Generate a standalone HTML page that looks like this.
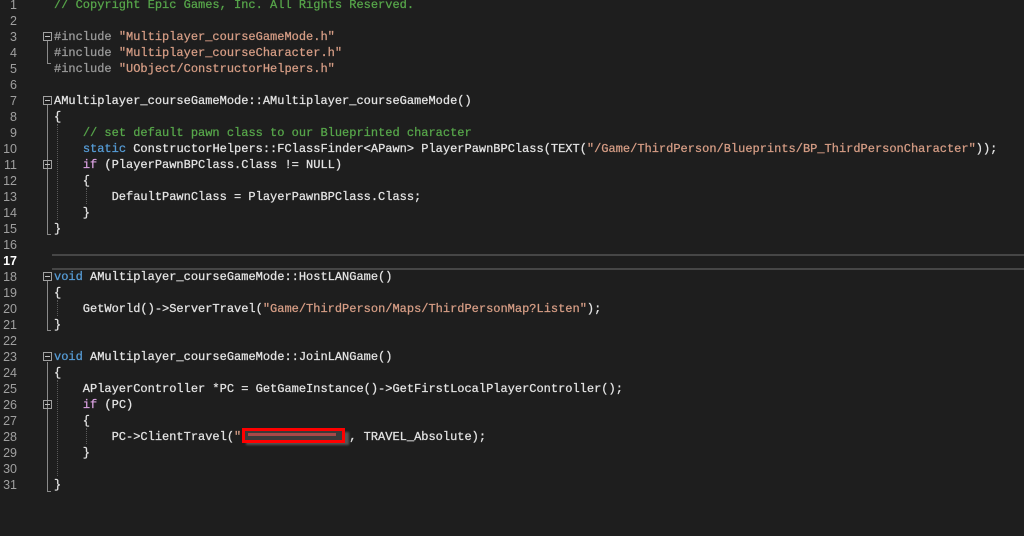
<!DOCTYPE html>
<html><head><meta charset="utf-8"><style>
body{margin:0;width:1024px;height:536px;background:#1e1e1e;overflow:hidden;position:relative;font-family:"Liberation Mono",monospace;font-size:12px;color:#e4e4e4}
.l{position:absolute;left:54px;white-space:pre;line-height:16px;height:16px;-webkit-text-stroke:0.25px currentColor}
.n{position:absolute;left:0;width:17px;text-align:right;color:#a0a0a0;white-space:pre;line-height:16px;font-family:"Liberation Sans",sans-serif;font-size:12.5px}
.c{color:#57a64a}.s{color:#d69d85}.k{color:#569cd6}.p{color:#d8a0df}.m{color:#9b9b9b}
.fold{position:absolute;left:43px;width:7px;height:7px;border:1px solid #a0a0a0;box-sizing:content-box}
.fold:after{content:"";position:absolute;left:1px;top:3px;width:5px;height:1px;background:#c0c0c0}
.v{position:absolute;left:47px;width:1px;background:#8a8a8a}
.d{position:absolute;width:0;border-left:1px dotted #5a5a5a}
</style></head><body>
<div class="n" style="top:-3px">1</div><div class="n" style="top:13px">2</div><div class="n" style="top:29px">3</div><div class="n" style="top:45px">4</div><div class="n" style="top:61px">5</div><div class="n" style="top:77px">6</div><div class="n" style="top:93px">7</div><div class="n" style="top:109px">8</div><div class="n" style="top:125px">9</div><div class="n" style="top:141px">10</div><div class="n" style="top:157px">11</div><div class="n" style="top:173px">12</div><div class="n" style="top:189px">13</div><div class="n" style="top:205px">14</div><div class="n" style="top:221px">15</div><div class="n" style="top:237px">16</div><div class="n" style="top:253px;color:#fff;font-weight:bold">17</div><div class="n" style="top:269px">18</div><div class="n" style="top:285px">19</div><div class="n" style="top:301px">20</div><div class="n" style="top:317px">21</div><div class="n" style="top:333px">22</div><div class="n" style="top:349px">23</div><div class="n" style="top:365px">24</div><div class="n" style="top:381px">25</div><div class="n" style="top:397px">26</div><div class="n" style="top:413px">27</div><div class="n" style="top:429px">28</div><div class="n" style="top:445px">29</div><div class="n" style="top:461px">30</div><div class="n" style="top:477px">31</div>

<div style="position:absolute;left:52px;right:0;top:254px;height:12px;border-top:2px solid #464646;border-bottom:2px solid #464646"></div>

<div class="v" style="top:41px;height:23px"></div><div style="position:absolute;left:47px;top:63px;width:4px;height:1px;background:#8a8a8a"></div>
<div class="v" style="top:105px;height:130px"></div><div style="position:absolute;left:47px;top:234px;width:4px;height:1px;background:#8a8a8a"></div>
<div class="v" style="top:281px;height:50px"></div><div style="position:absolute;left:47px;top:330px;width:4px;height:1px;background:#8a8a8a"></div>
<div class="v" style="top:362px;height:130px"></div><div style="position:absolute;left:47px;top:491px;width:4px;height:1px;background:#8a8a8a"></div>
<div class="fold" style="top:32px"></div><div class="fold" style="top:96px"></div><div class="fold" style="top:160px"></div><div class="fold" style="top:272px"></div><div class="fold" style="top:352px"></div><div class="fold" style="top:400px"></div>

<div class="d" style="left:57px;top:124px;height:96px"></div>
<div class="d" style="left:86px;top:188px;height:16px"></div>
<div class="d" style="left:57px;top:300px;height:16px"></div>
<div class="d" style="left:57px;top:380px;height:96px"></div>
<div class="d" style="left:86px;top:428px;height:16px"></div>

<div class="l c" style="top:-3px">// Copyright Epic Games, Inc. All Rights Reserved.</div>
<div class="l" style="top:29px"><span class="m">#include</span> <span class="s">"Multiplayer_courseGameMode.h"</span></div>
<div class="l" style="top:45px"><span class="m">#include</span> <span class="s">"Multiplayer_courseCharacter.h"</span></div>
<div class="l" style="top:61px"><span class="m">#include</span> <span class="s">"UObject/ConstructorHelpers.h"</span></div>
<div class="l" style="top:93px">AMultiplayer_courseGameMode::AMultiplayer_courseGameMode()</div>
<div class="l" style="top:109px">{</div>
<div class="l" style="top:125px">    <span class="c">// set default pawn class to our Blueprinted character</span></div>
<div class="l" style="top:141px">    <span class="k">static</span> ConstructorHelpers::FClassFinder&lt;APawn&gt; PlayerPawnBPClass(TEXT(<span class="s">"/Game/ThirdPerson/Blueprints/BP_ThirdPersonCharacter"</span>));</div>
<div class="l" style="top:157px">    <span class="p">if</span> (PlayerPawnBPClass.Class != NULL)</div>
<div class="l" style="top:173px">    {</div>
<div class="l" style="top:189px">        DefaultPawnClass = PlayerPawnBPClass.Class;</div>
<div class="l" style="top:205px">    }</div>
<div class="l" style="top:221px">}</div>
<div class="l" style="top:269px"><span class="k">void</span> AMultiplayer_courseGameMode::HostLANGame()</div>
<div class="l" style="top:285px">{</div>
<div class="l" style="top:301px">    GetWorld()-&gt;ServerTravel(<span class="s">"Game/ThirdPerson/Maps/ThirdPersonMap?Listen"</span>);</div>
<div class="l" style="top:317px">}</div>
<div class="l" style="top:349px"><span class="k">void</span> AMultiplayer_courseGameMode::JoinLANGame()</div>
<div class="l" style="top:365px">{</div>
<div class="l" style="top:381px">    APlayerController *PC = GetGameInstance()-&gt;GetFirstLocalPlayerController();</div>
<div class="l" style="top:397px">    <span class="p">if</span> (PC)</div>
<div class="l" style="top:413px">    {</div>
<div class="l" style="top:429px">        PC-&gt;ClientTravel(<span class="s">"</span>               , TRAVEL_Absolute);</div>
<div class="l" style="top:445px">    }</div>
<div class="l" style="top:477px">}</div>

<div style="position:absolute;left:246px;top:432px;width:103px;height:13px;background:#555;filter:blur(1px)"></div>
<div style="position:absolute;left:242px;top:428px;width:97px;height:9px;border:3px solid #f00;background:#3a3a3a"></div>
<div style="position:absolute;left:248px;top:433px;width:88px;height:3px;background:#a84848"></div>
</body></html>
